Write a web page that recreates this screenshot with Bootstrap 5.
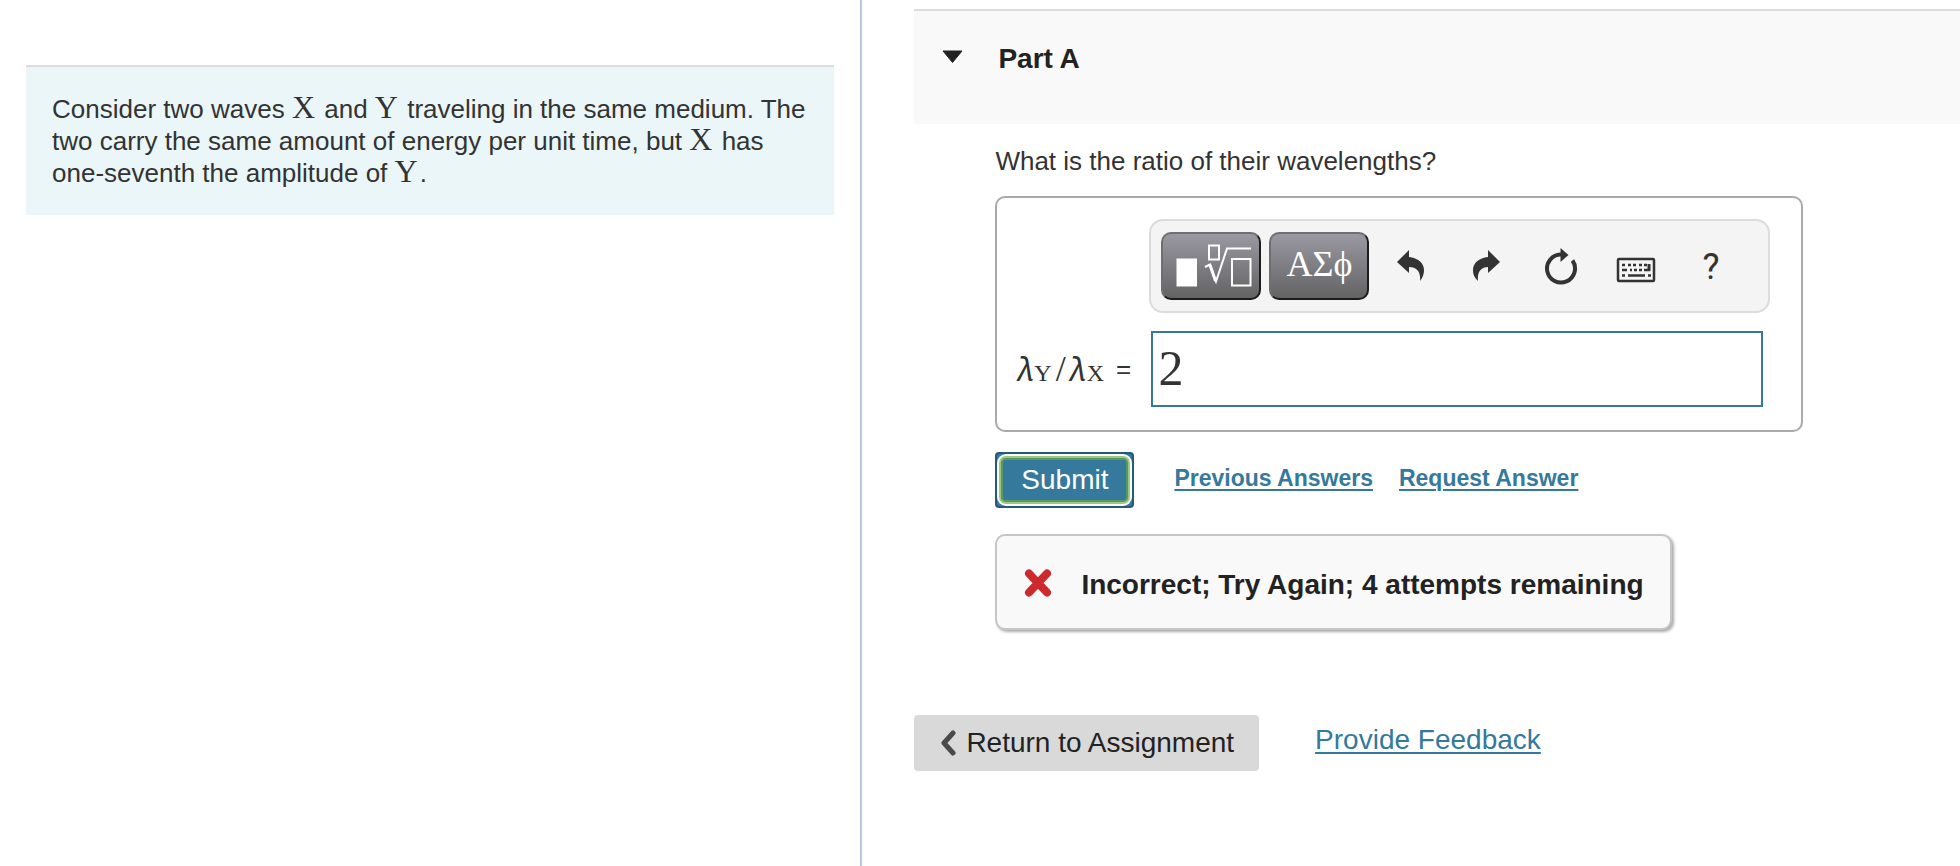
<!DOCTYPE html>
<html lang="en">
<head>
<meta charset="utf-8">
<meta name="viewport" content="width=device-width, initial-scale=1">
<title>Part A</title>
<link href="https://cdn.jsdelivr.net/npm/bootstrap@5.3.0/dist/css/bootstrap.min.css" rel="stylesheet">
<style>
  body { font-family: "Liberation Sans", Arial, sans-serif; font-size: 26px; line-height: 32px; color: #333; background: #fff; }
  .pane-left { width: 44%; padding: 65px 26px 0; border-right: 2px solid #b9c8de; }
  .pane-right { padding: 9px 0 0 52px; min-width: 0; }
  .prompt { background: #eaf6f8; border-top: 2px solid #dcdcdc; padding: 26px 22px 26px 26px; }
  .sym { font-family: "Liberation Serif", serif; font-size: 32px; line-height: 24px; padding-right: 2px; }
  .part-head { background: #f9f9f9; border-top: 2px solid #dcdcdc; height: 115px; padding: 32px 28px 0; color: #222; }
  .part-head button { width: 56px; height: 28px; }
  .part-head h2 { font-size: 28px; line-height: 32px; }
  .part-body { padding-left: 81px; }
  .question { padding: 21px 0 19px; }
  .answer { max-width: 808px; border: 2px solid #a9a9a9; border-radius: 10px; padding: 21px 31px 23px 20px; row-gap: 18px; grid-template-columns: 132px 1fr; }
  .tools { grid-column: 2; background: #f4f4f4; border: 2px solid #dcdcdc; border-radius: 14px; padding: 11px 10px; }
  .tool-dark { width: 100px; height: 68px; border-style: solid; border-width: 2px; border-color: #6f6f72 #1c1c1c #1c1c1c #6f6f72; border-radius: 10px; background: linear-gradient(#9a98a2, #636363); color: #fff; font: 36px/60px "Liberation Serif", serif; padding: 0 0 4px; }
  .tool-dark svg { display: block; margin-bottom: -4px; }
  .tool-plain { width: 75px; height: 68px; border: 0; background: none; padding: 0 0 4px; color: #333; font: 36px/48px Roboto, sans-serif; }
  .tool-plain.help { padding: 2px 0 0; }
  .quantity { font: 36px/40px "Liberation Serif", serif; }
  .lam { font-family: "Noto Sans", sans-serif; font-style: italic; font-size: 32px; }
  .low { font-size: 24px; line-height: 24px; padding-top: 8px; }
  .slash { padding: 0 4px; }
  .eq { font-family: "Liberation Sans", sans-serif; font-size: 26px; padding-left: 12px; }
  .entry { width: 612px; max-width: 100%; height: 76px; border: 2px solid #35799c; border-radius: 0; padding: 0 5px 2px; margin-left: 2px; font: 50px/60px "Liberation Serif", serif; color: #333; outline: 0; }
  .actions { padding: 20px 0 26px; column-gap: 26px; }
  .submit { width: 139px; height: 56px; border: 2px solid #24597a; border-radius: 4px; padding: 2px; background: #35799c; margin-right: 14px; }
  .submit span { display: block; height: 48px; border: 2px solid #9cc884; border-radius: 7px; background: #35799c; box-shadow: inset 0 0 0 2px #549b62, 0 0 0 2px #fff; color: #fff; font-size: 28px; line-height: 44px; }
  a, a:hover { color: #35799c; text-underline-offset: 3px; text-decoration-thickness: 2px; }
  .actions a { font-size: 23px; font-weight: 700; padding-bottom: 4px; }
  .result { width: fit-content; height: 96px; border: 2px solid #c6c6c6; border-radius: 10px; background: #f9f9f9; box-shadow: 2px 2px 3px #aaa; padding: 6px 26px 0; column-gap: 28px; color: #222; font-size: 28px; font-weight: 700; }
  .result svg { margin-bottom: 4px; }
  .foot { padding-top: 85px; column-gap: 56px; font-size: 28px; }
  .foot a { padding-bottom: 6px; }
  .back { height: 56px; border: 0; border-radius: 4px; background: #d9d9d9; color: #222; padding: 0 25px 0 26px; column-gap: 10px; }
</style>
</head>
<body>
<main class="d-flex min-vh-100">
  <section class="pane-left flex-shrink-0">
    <p class="prompt mb-0">Consider two waves <span class="sym">X</span> and <span class="sym">Y</span> traveling in the same medium. The two carry the same amount of energy per unit time, but <span class="sym">X</span> has one-seventh the amplitude of <span class="sym">Y</span>.</p>
  </section>
  <section class="pane-right flex-grow-1">
    <header class="part-head d-flex align-items-start">
      <button type="button" class="btn p-0 border-0 d-flex align-items-center" aria-label="Collapse Part A">
        <svg width="21" height="14" viewBox="0 0 21 14"><path d="M1 1h19L10.500 12.500z" fill="#222" stroke="#222" stroke-linejoin="round"/></svg>
      </button>
      <h2 class="fw-bold mb-0">Part A</h2>
    </header>
    <div class="part-body">
      <p class="question mb-0">What is the ratio of their wavelengths?</p>
      <div class="answer d-grid align-items-center">
        <div class="tools d-flex align-items-center">
          <button type="button" class="tool-dark me-2" aria-label="Templates">
            <svg width="96" height="64" viewBox="0 0 96 64" fill="none" stroke="#fff" stroke-width="2"><path d="M13.500 24.500h20.500v28h-20.500z" fill="#fff" stroke="none"/><path d="M46 11.500h10v14H46zM69 25h18.500v26.500H69z"/><path d="M42 33l5-2.500 6 17 11-33h24" /><path d="M47 31l5.500 16" stroke-width="3"/></svg>
          </button>
          <button type="button" class="tool-dark me-1" aria-label="Symbols">ΑΣϕ</button>
          <button type="button" class="tool-plain" aria-label="Undo">
            <svg width="30" height="34" viewBox="0 0 30 34" fill="#333"><path d="M1 13L13 1v7c9 1 15 6 15 13 0 4-1 7-4 11 1-9-3-14-11-14v6z"/></svg>
          </button>
          <button type="button" class="tool-plain" aria-label="Redo">
            <svg width="30" height="34" viewBox="0 0 30 34" fill="#333"><path d="M29 13L17 1v7C8 9 2 14 2 21c0 4 1 7 5 11-1-9 3-14 10-14v6z"/></svg>
          </button>
          <button type="button" class="tool-plain" aria-label="Reset">
            <svg width="34" height="38" viewBox="0 0 34 38"><path d="M17 7.500a14 14 0 1 0 11.500 6" fill="none" stroke="#333" stroke-width="4"/><path d="M16.500 1l8 7-8 7z" fill="#333"/></svg>
          </button>
          <button type="button" class="tool-plain" aria-label="Keyboard shortcuts">
            <svg class="mt-2" width="40" height="26" viewBox="0 0 40 26" fill="none" stroke="#333"><rect x="2" y="2" width="36" height="22" rx="1" stroke-width="2.500"/><path d="M6 8h3m3 0h3m2 0h3m3 0h3m2 0h3M6 13h5m3 0h2m2 0h3m2 0h3m2 0h6M6 18.500h3m3 0h17m3 0h3" stroke-width="2.500"/><path d="M33 7v7" stroke-width="3"/></svg>
          </button>
          <button type="button" class="tool-plain help" aria-label="Help">?</button>
        </div>
        <label class="quantity d-flex align-items-center text-nowrap" for="answer-value"><span class="lam">λ</span><span class="low">Y</span><span class="slash">/</span><span class="lam">λ</span><span class="low">X</span><span class="eq">=</span></label>
        <input class="entry" id="answer-value" type="text" value="2">
      </div>
      <div class="actions d-flex align-items-center">
        <button type="submit" class="submit"><span>Submit</span></button>
        <a href="#">Previous Answers</a>
        <a href="#">Request Answer</a>
      </div>
      <div class="result d-flex align-items-center" role="alert">
        <svg width="30" height="30" viewBox="0 0 30 30"><path d="M6 5.500l18 19M24 5.500L6 24.500" stroke="#cc2a2d" stroke-width="8" stroke-linecap="round"/></svg>
        <span>Incorrect; Try Again; 4 attempts remaining</span>
      </div>
    </div>
    <div class="foot d-flex align-items-center">
      <button type="button" class="back d-flex align-items-center">
        <svg width="16" height="26" viewBox="0 0 16 26"><path d="M13 3L4 13l9 10" fill="none" stroke="#4a4a4a" stroke-width="5" stroke-linecap="round" stroke-linejoin="round"/></svg>
        Return to Assignment
      </button>
      <a href="#">Provide Feedback</a>
    </div>
  </section>
</main>
<script src="https://cdn.jsdelivr.net/npm/bootstrap@5.3.0/dist/js/bootstrap.bundle.min.js"></script>
</body>
</html>
